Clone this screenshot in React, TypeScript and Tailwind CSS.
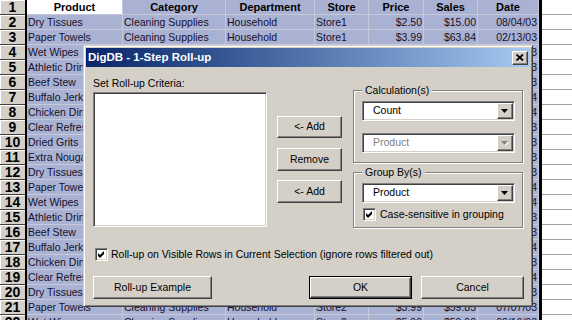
import React from 'react';

type Row = [string, string, string, string, string, string, string];

const rows: Row[] = [
  ['Dry Tissues', 'Cleaning Supplies', 'Household', 'Store1', '$2.50', '$15.00', '08/04/03'],
  ['Paper Towels', 'Cleaning Supplies', 'Household', 'Store1', '$3.99', '$63.84', '02/13/03'],
  ['Wet Wipes', 'Cleaning Supplies', 'Household', 'Store1', '$5.99', '$59.90', '06/13/03'],
  ['Athletic Drink', 'Beverages', 'Grocery', 'Store1', '$1.29', '$25.80', '03/22/03'],
  ['Beef Stew', 'Canned Foods', 'Grocery', 'Store1', '$2.19', '$32.85', '11/08/03'],
  ['Buffalo Jerky', 'Snacks', 'Grocery', 'Store1', '$4.50', '$45.00', '01/15/04'],
  ['Chicken Dinner', 'Frozen Foods', 'Grocery', 'Store1', '$3.49', '$41.88', '02/02/04'],
  ['Clear Refreshment', 'Beverages', 'Grocery', 'Store1', '$0.99', '$19.80', '07/19/03'],
  ['Dried Grits', 'Breakfast', 'Grocery', 'Store1', '$2.79', '$27.90', '05/30/03'],
  ['Extra Nougat', 'Candy', 'Grocery', 'Store1', '$0.89', '$17.80', '09/11/03'],
  ['Dry Tissues', 'Cleaning Supplies', 'Household', 'Store2', '$2.50', '$22.50', '10/06/03'],
  ['Paper Towels', 'Cleaning Supplies', 'Household', 'Store2', '$3.99', '$39.90', '12/14/04'],
  ['Wet Wipes', 'Cleaning Supplies', 'Household', 'Store2', '$5.99', '$47.92', '03/03/04'],
  ['Athletic Drink', 'Beverages', 'Grocery', 'Store2', '$1.29', '$12.90', '04/21/03'],
  ['Beef Stew', 'Canned Foods', 'Grocery', 'Store2', '$2.19', '$21.90', '06/18/03'],
  ['Buffalo Jerky', 'Snacks', 'Grocery', 'Store2', '$4.50', '$54.00', '08/27/04'],
  ['Chicken Dinner', 'Frozen Foods', 'Grocery', 'Store2', '$3.49', '$34.90', '01/09/03'],
  ['Clear Refreshment', 'Beverages', 'Grocery', 'Store2', '$0.99', '$9.90', '02/25/04'],
  ['Dry Tissues', 'Cleaning Supplies', 'Household', 'Store2', '$2.50', '$30.00', '05/12/03'],
  ['Paper Towels', 'Cleaning Supplies', 'Household', 'Store2', '$3.99', '$59.85', '07/07/03'],
  ['Wet Wipes', 'Cleaning Supplies', 'Household', 'Store2', '$5.99', '$59.90', '09/16/03'],
];

const headers = ['Product', 'Category', 'Department', 'Store', 'Price', 'Sales', 'Date'];
const widths = ['w-[96px]', 'w-[103px]', 'w-[89px]', 'w-[54px]', 'w-[55px]', 'w-[54px]', 'w-[61px]'];
const aligns = ['text-left', 'text-left', 'text-left', 'text-left', 'text-right', 'text-right', 'text-right'];

const raised =
  'bg-[#d4d0c8] border border-t-white border-l-white border-r-[#404040] border-b-[#404040] shadow-[inset_-1px_-1px_0_#808080]';
const sunken =
  'border border-t-[#808080] border-l-[#808080] border-r-white border-b-white shadow-[inset_1px_1px_0_#404040,inset_-1px_-1px_0_#d4d0c8]';

const RowHeader = ({ n }: { n: number }) => (
  <div className="w-[27px] shrink-0 flex bg-[#d4d0c8] border-r-2 border-r-black">
    <div className="flex-1 flex items-center justify-center border-b border-b-[#404040] shadow-[inset_1px_1px_0_#fff] text-[14px] font-bold leading-none text-black">
      {n}
    </div>
  </div>
);

const Sheet = () => (
  <div className="flex flex-col">
    <div className="flex h-[15px]">
      <RowHeader n={1} />
      {headers.map((h, i) => (
        <div
          key={h}
          className={`${widths[i]} shrink-0 border-r border-b border-[#c5c9d9] text-center text-[11px] font-bold leading-[14px] text-black overflow-hidden whitespace-nowrap ${
            i === 0 ? 'bg-white' : 'bg-[#aab2d3]'
          }`}
        >
          {h}
        </div>
      ))}
      <div className="w-[3px] shrink-0 bg-black" />
      <div className="flex-1 border-b border-[#a0a0a0]" />
    </div>
    {rows.map((r, ri) => (
      <div key={ri} className="flex h-[15px]">
        <RowHeader n={ri + 2} />
        {r.map((c, ci) => (
          <div
            key={ci}
            className={`${widths[ci]} ${aligns[ci]} shrink-0 bg-[#aab2d3] border-r border-b border-[#c5c9d9] px-[1px] text-[10.5px] leading-[14px] text-[#14102a] overflow-hidden whitespace-nowrap`}
          >
            {c}
          </div>
        ))}
        <div className="w-[3px] shrink-0 bg-black" />
        <div className="flex-1 border-b border-[#a0a0a0]" />
      </div>
    ))}
  </div>
);

const Btn = ({ children, className = '', isDefault = false }: { children: React.ReactNode; className?: string; isDefault?: boolean }) =>
  isDefault ? (
    <button className={`border border-black p-0 ${className}`}>
      <div className={`h-full w-full ${raised} flex items-center justify-center`}>{children}</div>
    </button>
  ) : (
    <button className={`${raised} flex items-center justify-center ${className}`}>{children}</button>
  );

const Arrow = ({ disabled }: { disabled?: boolean }) => (
  <svg width="8" height="5" viewBox="0 0 8 5">
    {disabled && <polygon points="1,1 8,1 4.5,5" fill="#fff" />}
    <polygon points="0,0 7,0 3.5,4" fill={disabled ? '#808080' : '#000'} />
  </svg>
);

const Combo = ({ value, disabled }: { value: string; disabled?: boolean }) => (
  <div className={`h-[20px] w-[153px] bg-white ${sunken} flex items-center p-[1px]`}>
    <span className={`flex-1 pl-[9px] ${disabled ? 'text-[#808080]' : 'text-black'}`}>{value}</span>
    <div className={`w-[16px] h-[16px] ${raised} flex items-center justify-center`}>
      <Arrow disabled={disabled} />
    </div>
  </div>
);

const Check = () => (
  <div className={`w-[13px] h-[13px] shrink-0 bg-white ${sunken} flex items-center justify-center`}>
    <svg width="9" height="9" viewBox="0 0 9 9">
      <polygon points="1,3 3,5 7,1 7,4 3,8 1,6" fill="#000" />
    </svg>
  </div>
);

const Group = ({ title, children, className = '' }: { title: string; children: React.ReactNode; className?: string }) => (
  <fieldset
    className={`border border-[#808080] shadow-[inset_1px_1px_0_#fff,1px_1px_0_#fff] pl-[8px] pr-[7px] ${className}`}
  >
    <legend className="px-[3px] leading-[13px] bg-[#d4d0c8]">{title}</legend>
    {children}
  </fieldset>
);

const Dialog = () => (
  <div
    className="absolute left-[83px] top-[45px] w-[450px] h-[262px] bg-[#d4d0c8] p-[2px] border border-t-[#d4d0c8] border-l-[#d4d0c8] border-r-[#404040] border-b-[#404040] shadow-[inset_1px_1px_0_#fff,inset_-1px_-1px_0_#808080] text-[10.5px] text-black"
    style={{ fontFamily: '"Liberation Sans", Arial, sans-serif' }}
  >
    <div className="h-[19px] flex items-center justify-between pl-[2px] pr-[2px] bg-gradient-to-r from-[#0a246a] to-[#a6caf0]">
      <span className="text-white font-bold text-[11.5px]">DigDB - 1-Step Roll-up</span>
      <div className={`w-[16px] h-[14px] ${raised} flex items-center justify-center`}>
        <svg width="8" height="7" viewBox="0 0 8 7">
          <path d="M0.5 0.5 L7 6.5 M7 0.5 L0.5 6.5" stroke="#000" strokeWidth="1.8" />
        </svg>
      </div>
    </div>

    <div className="pl-[7px] pt-[10px]">
      <div className="flex items-start">
        <div className="w-[174px] flex flex-col">
          <div className="leading-[13px]">Set Roll-up Criteria:</div>
          <div className={`mt-[2px] h-[135px] bg-white ${sunken}`} />
        </div>

        <div className="ml-[10px] w-[65px] flex flex-col pt-[39px]">
          <Btn className="h-[22px] w-full">&lt;- Add</Btn>
          <Btn className="mt-[10px] h-[23px] w-full">Remove</Btn>
          <Btn className="mt-[9px] h-[23px] w-full">&lt;- Add</Btn>
        </div>

        <div className="ml-[11px] w-[170px] flex flex-col pt-[7px]">
          <Group title="Calculation(s)" className="pt-[4px] pb-[9px]">
            <Combo value="Count" />
            <div className="mt-[12px]">
              <Combo value="Product" disabled />
            </div>
          </Group>
          <Group title="Group By(s)" className="mt-[3px] pt-[4px] pb-[6px]">
            <Combo value="Product" />
            <div className="mt-[5px] flex items-center gap-[4px] pl-[1px] leading-[13px]">
              <Check />
              <span>Case-sensitive in grouping</span>
            </div>
          </Group>
        </div>
      </div>

      <div className="mt-[20px] ml-[2px] flex items-center gap-[3px] leading-[13px]">
        <Check />
        <span>Roll-up on Visible Rows in Current Selection (ignore rows filtered out)</span>
      </div>

      <div className="mt-[15px] flex">
        <Btn className="h-[23px] w-[119px]">Roll-up Example</Btn>
        <Btn isDefault className="ml-[97px] h-[23px] w-[103px]">OK</Btn>
        <Btn className="ml-[9px] h-[23px] w-[103px]">Cancel</Btn>
      </div>
    </div>
  </div>
);

export default function App() {
  return (
    <div
      className="relative w-[572px] h-[320px] overflow-hidden bg-white"
      style={{ fontFamily: '"Liberation Sans", Arial, sans-serif' }}
    >
      <Sheet />
      <Dialog />
    </div>
  );
}
